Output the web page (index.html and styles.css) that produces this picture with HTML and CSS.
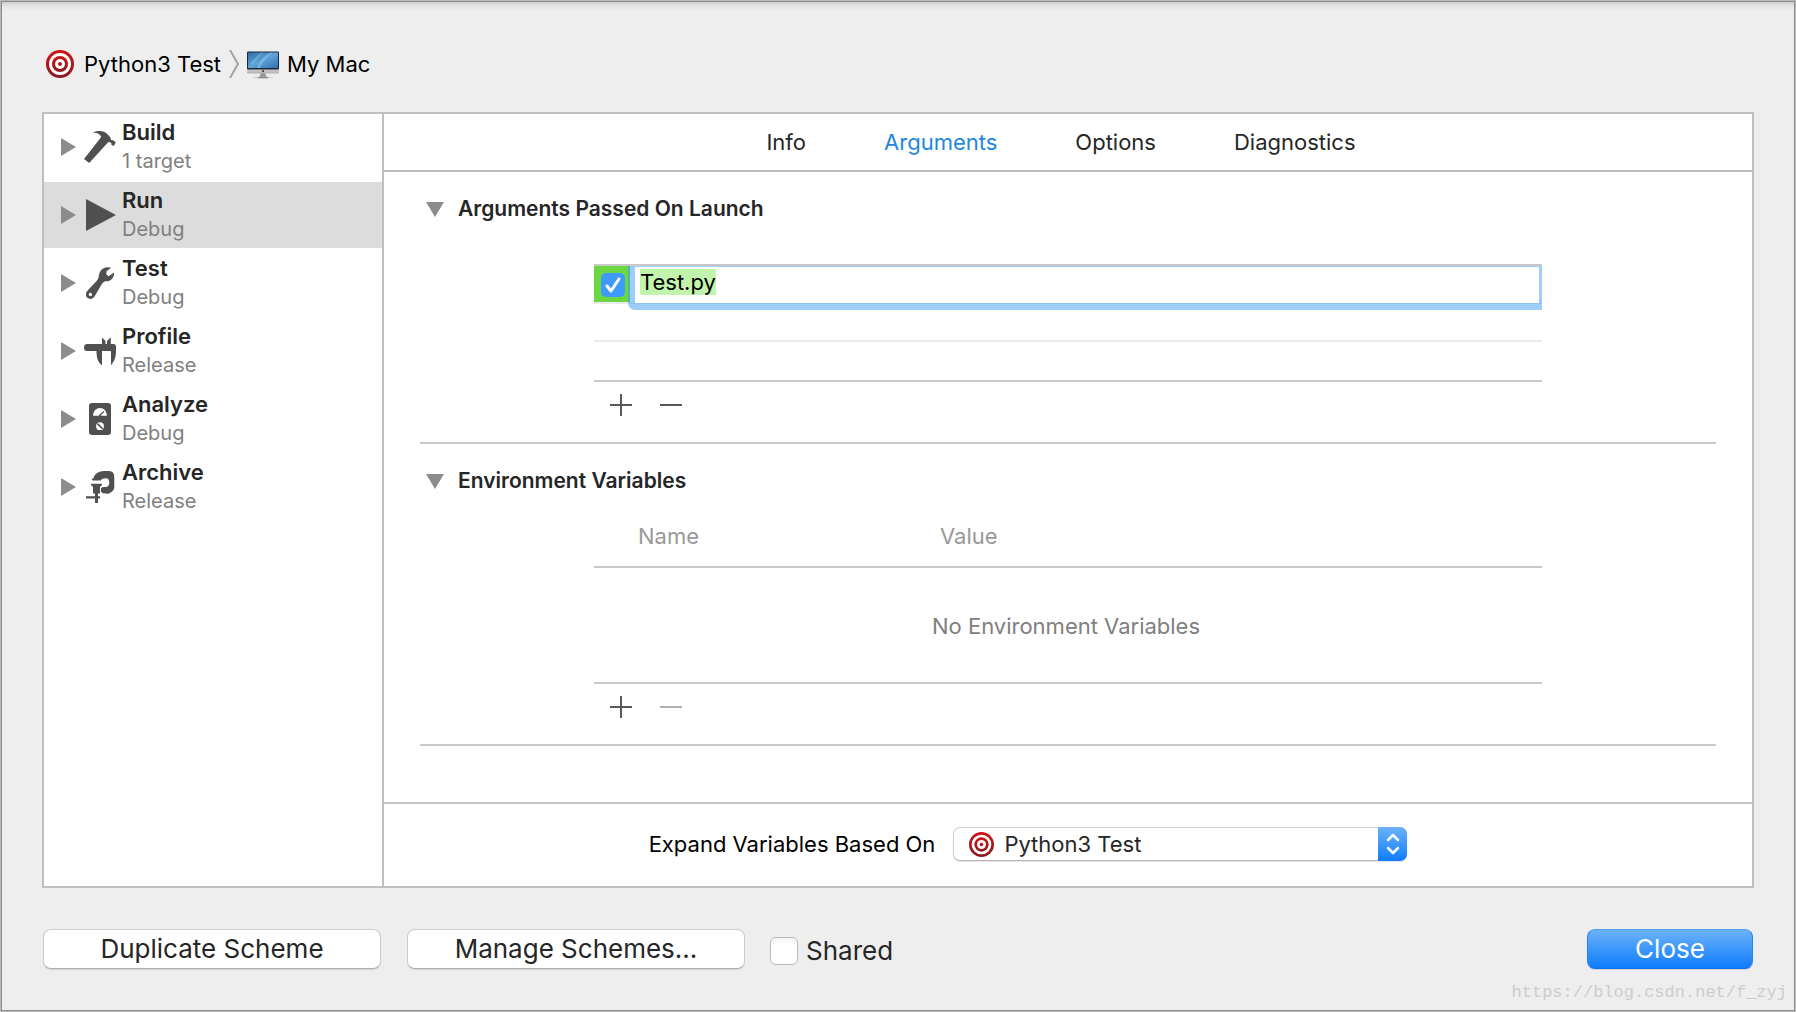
FILE: index.html
```html
<!DOCTYPE html>
<html lang="en">
<head>
<meta charset="utf-8">
<title>Python3 Test – Scheme</title>
<link rel="stylesheet" href="styles.css">
</head>
<body>
<svg class="sprite" aria-hidden="true">
  <defs>
    <linearGradient id="red" x1="0" y1="0" x2="0" y2="1"><stop offset="0" stop-color="#cf1317"/><stop offset="1" stop-color="#8a1a20"/></linearGradient>
    <linearGradient id="sky" x1="0" y1="0" x2="1" y2="1"><stop offset="0" stop-color="#2e6ba8"/><stop offset="0.5" stop-color="#5fa3d8"/><stop offset="1" stop-color="#2f6fb0"/></linearGradient>
    <linearGradient id="chin" x1="0" y1="0" x2="0" y2="1"><stop offset="0" stop-color="#d8d4d8"/><stop offset="1" stop-color="#b4b0b4"/></linearGradient>
  </defs>
  <symbol id="target" viewBox="0 0 28 28">
    <circle cx="14" cy="14" r="14" fill="url(#red)"/>
    <circle cx="14" cy="14" r="11" fill="#fff"/>
    <circle cx="14" cy="14" r="8" fill="url(#red)"/>
    <circle cx="14" cy="14" r="5" fill="#fff"/>
    <circle cx="14" cy="14" r="2" fill="#b3161b"/>
  </symbol>
  <symbol id="right" viewBox="0 0 15 18"><path d="M0 0L15 9L0 18Z"/></symbol>
  <symbol id="down" viewBox="0 0 18 15"><path d="M0 0H18L9 15Z"/></symbol>
  <symbol id="plus" viewBox="0 0 22 22"><path d="M10 0h2v10h10v2H12v10h-2V12H0v-2h10z"/></symbol>
  <symbol id="minus" viewBox="0 0 22 22"><path d="M0 10h22v2H0z"/></symbol>
</svg>

<div class="window">
  <header class="scheme">
    <svg class="scheme-target"><use href="#target"/></svg>
    <span>Python3 Test</span>
    <svg class="chevron" viewBox="0 0 10 28"><path d="M1 0L9 14L1 28" fill="none" stroke="#a3a3a3" stroke-width="2"/></svg>
    <svg class="mac" viewBox="0 0 32 32">
      <ellipse cx="16" cy="29.500" rx="11" ry="1.200" fill="#d6d6d6"/>
      <path d="M13.500 25h5l.8 4h-6.600z" fill="#9a9a9a"/>
      <path d="M11 29.200h10v1H11z" fill="#7d7d7d"/>
      <rect y="20" width="32" height="5.500" rx="1" fill="url(#chin)"/>
      <rect y="3.500" width="32" height="18" rx="1" fill="#1c2938"/>
      <rect x="1" y="4.500" width="30" height="15.500" fill="url(#sky)"/>
      <path d="M10 20C12 13 17 8.500 24 4.500h2C20 9 15 14 13 20zM4 15C8 10 12 7 15 4.500h1C13 8 9 12 5 17z" fill="#9cc9ea" opacity=".5"/>
      <circle cx="16" cy="23.200" r="1.100" fill="#444"/>
    </svg>
    <span>My Mac</span>
  </header>

  <main class="panel">
    <nav class="actions" aria-label="Scheme actions">
      <a class="action" href="#build">
        <svg class="tri"><use href="#right"/></svg>
        <svg class="glyph" viewBox="0 0 32 32"><path d="M9 1.500C15-.8 20-.3 23.500 3.200L26.500 6.500L27 9L29 9.300L31.800 11.200L29.800 15L27.500 14L27.200 12L24.800 10.800L23 12.500L5.200 32L0 28L14.500 9.500L17.200 6C16.500 3 13 2 9 1.500Z"/></svg>
        <span><b>Build</b><small>1 target</small></span>
      </a>
      <a class="action current" href="#run" aria-current="page">
        <svg class="tri"><use href="#right"/></svg>
        <svg class="glyph" viewBox="0 0 32 32"><path d="M2 0L32 16L2 32Z"/></svg>
        <span><b>Run</b><small>Debug</small></span>
      </a>
      <a class="action" href="#test">
        <svg class="tri"><use href="#right"/></svg>
        <svg class="glyph" viewBox="0 0 32 32"><path fill-rule="evenodd" d="M3.200 24L13 13.500C15 11 14.500 9 15.500 6C17 1.500 22-1 27.200.8L22.500 4.300L22.300 7.200L24.600 9.200L30 5.600C30.500 10 27 14.500 22 14.300C19.500 14.300 18.500 16 17 18.500L10.500 29.500C9 32 5.500 32.800 3.300 30.800C1.400 29 1.500 26 3.200 24ZM6.400 25.700A1.700 1.700 0 1 0 6.400 29.100A1.700 1.700 0 1 0 6.400 25.700Z"/></svg>
        <span><b>Test</b><small>Debug</small></span>
      </a>
      <a class="action" href="#profile">
        <svg class="tri"><use href="#right"/></svg>
        <svg class="glyph" viewBox="0 0 32 32"><path d="M3 9H18V2.500L21.500 6V9H23V6L26.800 2.200V9H29.500Q32 9 32 11.500V16C32 22 30.500 26 27 30.200V16H18V30.200C13.500 27 12.500 22 12.500 16H3Q0 16 0 12.500Q0 9 3 9Z"/></svg>
        <span><b>Profile</b><small>Release</small></span>
      </a>
      <a class="action" href="#analyze">
        <svg class="tri"><use href="#right"/></svg>
        <svg class="glyph" viewBox="0 0 32 32"><rect x="5" width="22" height="32" rx="3"/><path d="M9 12.800C9.500 8 12 5 16 5S22.500 8 23 12.800H17.500A1.800 1.800 0 0 0 14.500 12.800Z" fill="#fff"/><path d="M15.500 12.500L20 8.500" stroke="#505050" stroke-width="1.200"/><circle cx="16" cy="23.200" r="3.900" fill="#fff"/><path d="M13.500 20.600L18.500 25.800" stroke="#505050" stroke-width="1.600"/></svg>
        <span><b>Analyze</b><small>Debug</small></span>
      </a>
      <a class="action" href="#archive">
        <svg class="tri"><use href="#right"/></svg>
        <svg class="glyph" viewBox="0 0 32 32"><path d="M7.500 7.500H9.500C10 3 15 0 20 0H25Q30.300 0 30.300 6V16Q30.300 19 27.500 21L24.500 22.700L19 22.300L17 21V17L19 16H22.500Q25.300 15 25.300 11.500Q25.300 7.500 22 7.300L18.500 7.800L16.500 9.500H8.500ZM7 12.700H18V14L16 16V22.500H14V32H11V22.500H9V16L7 14ZM2 25.200H16V27.500H2Z"/></svg>
        <span><b>Archive</b><small>Release</small></span>
      </a>
    </nav>

    <div class="detail">
      <nav class="tabs" aria-label="Settings">
        <button type="button">Info</button>
        <button type="button" class="active">Arguments</button>
        <button type="button">Options</button>
        <button type="button">Diagnostics</button>
      </nav>

      <div class="sections">
        <section>
          <h2><svg class="fold"><use href="#down"/></svg>Arguments Passed On Launch</h2>
          <table class="arguments" aria-label="Arguments Passed On Launch">
            <tbody>
              <tr>
                <td class="enabled"><label class="check"><input type="checkbox" checked aria-label="Use argument"><svg viewBox="0 0 24 24"><path d="M6 13L10 18L18 6" fill="none" stroke="#fff" stroke-width="3" stroke-linecap="round" stroke-linejoin="round"/></svg></label></td>
                <td><input class="argument" type="text" value="Test.py" aria-label="Argument" spellcheck="false" autofocus></td>
              </tr>
              <tr><td colspan="2"></td></tr>
              <tr class="last"><td colspan="2"></td></tr>
            </tbody>
          </table>
          <div class="tools">
            <button type="button" aria-label="Add argument"><svg><use href="#plus"/></svg></button>
            <button type="button" aria-label="Remove argument"><svg><use href="#minus"/></svg></button>
          </div>
        </section>

        <section>
          <h2><svg class="fold"><use href="#down"/></svg>Environment Variables</h2>
          <table class="variables">
            <thead><tr><th class="name">Name</th><th>Value</th></tr></thead>
            <tbody><tr><td colspan="2">No Environment Variables</td></tr></tbody>
          </table>
          <div class="tools">
            <button type="button" aria-label="Add variable"><svg><use href="#plus"/></svg></button>
            <button type="button" aria-label="Remove variable" disabled><svg><use href="#minus"/></svg></button>
          </div>
        </section>
      </div>

      <div class="expand">
        <label for="expand">Expand Variables Based On</label>
        <div class="popup">
          <select id="expand"><option>Python3 Test</option></select>
          <svg class="popup-target"><use href="#target"/></svg>
          <span class="popup-arrows"><svg viewBox="0 0 14 22"><path d="M2 7L7 2L12 7M2 15L7 20L12 15" fill="none" stroke="#fff" stroke-width="2.500" stroke-linecap="round" stroke-linejoin="round"/></svg></span>
        </div>
      </div>
    </div>
  </main>

  <footer class="bottom">
    <button type="button" class="push">Duplicate Scheme</button>
    <button type="button" class="push">Manage Schemes...</button>
    <label class="shared"><input type="checkbox">Shared</label>
    <button type="button" class="push primary">Close</button>
  </footer>
  <span class="mark">https://blog.csdn.net/f_zyj</span>
</div>
<script src="script.js"></script>
</body>
</html>
```
FILE: script.js
```js
// Start with the argument ready to be typed over.
const field = document.querySelector('.argument');
field.focus();
field.select();
```
FILE: styles.css
```css
* { box-sizing: border-box; }

body {
  margin: 0;
  padding: 2px;
  background: #b9b9b9;
  color: #000;
  font: 22px/28px Inter, "Liberation Sans", sans-serif;
}

button, input, select { font: inherit; color: inherit; margin: 0; }
button { padding: 0; border: 0; background: none; }
svg { display: block; flex: none; }
.sprite { position: absolute; width: 0; height: 0; }

.window {
  position: relative;
  display: flex;
  flex-direction: column;
  min-height: calc(100vh - 4px);
  padding: 0 40px;
  background: linear-gradient(#cfcfcf, #e4e4e4 4px, #eee 9px);
  box-shadow: 0 0 0 1px #8c8c8c;
}

.scheme { display: flex; align-items: center; padding: 46px 4px 32px; }
.scheme-target { width: 28px; height: 28px; margin-right: 10px; }
.chevron { width: 10px; height: 28px; margin: 0 8px; }
.mac { width: 32px; height: 32px; margin-right: 8px; }

.panel { flex: 1; display: flex; border: 2px solid #bfbfbf; background: #fff; }

.actions { width: 340px; flex: none; border-right: 2px solid #bfbfbf; }
.action {
  display: flex;
  align-items: center;
  margin-bottom: 2px;
  padding: 4px 16px 5px;
  color: #262626;
  text-decoration: none;
}
.current { background: #dcdcdc; }
.action b, .action small { display: block; }
.action b { font-weight: 600; }
.action small { padding-top: 1px; font-size: 20px; color: #808080; }
.tri { width: 15px; height: 18px; margin: 0 8px 0 1px; fill: #8c8c8c; }
.glyph { width: 32px; height: 32px; margin-right: 6px; fill: #505050; }

.detail { flex: 1; min-width: 0; display: flex; flex-direction: column; }

.tabs {
  display: flex;
  justify-content: center;
  gap: 78px;
  padding: 14px 14px 14px 0;
  border-bottom: 2px solid #bfbfbf;
}
.tabs button { color: #262626; }
.tabs .active { color: #1f87dd; }

.sections { flex: 1; padding: 0 36px; }
section { padding: 25px 0 26px; border-bottom: 2px solid #c8c8c8; }
h2 {
  display: flex;
  align-items: center;
  gap: 14px;
  margin: 0;
  padding-left: 6px;
  font-size: 21px;
  line-height: 24px;
  font-weight: 600;
  color: #262626;
}
.fold { width: 18px; height: 15px; fill: #8c8c8c; }

table {
  width: calc(100% - 348px);
  margin: 0 174px;
  border-spacing: 0;
  table-layout: fixed;
}
td, th { padding: 0; }

.arguments { margin-top: 43px; border-top: 2px solid #c8c8c8; border-bottom: 2px solid #c8c8c8; }
.arguments td { height: 38px; border-bottom: 2px solid #ebebeb; vertical-align: top; }
.arguments .last td { border-bottom: 0; }
.arguments .enabled { width: 36px; padding: 7px 0 0 7px; background: #6ad743; background-clip: padding-box; }
.check { position: relative; display: block; width: 24px; height: 24px; }
.check input {
  display: block;
  width: 24px;
  height: 24px;
  appearance: none;
  border-radius: 5px;
  background: #3f9bfb;
}
.check svg { position: absolute; inset: 0; width: 24px; height: 24px; pointer-events: none; }
.argument {
  position: relative;
  display: block;
  width: calc(100% + 2px);
  height: 44px;
  margin: 0 0 -8px -2px;
  padding: 1px 4px 7px 5px;
  border: solid rgba(62, 155, 245, 0.5);
  border-width: 1px 3px 7px 7px;
  border-bottom-left-radius: 7px;
  outline: 0;
  background: #fff;
  background-clip: padding-box;
  caret-color: transparent;
}
.argument::selection { background: #c3f4ad; color: #000; }

.variables { margin-top: 13px; border-bottom: 2px solid #c8c8c8; }
th { height: 62px; border-bottom: 2px solid #c8c8c8; color: #999; font-weight: 400; text-align: left; }
.name { width: 346px; padding-left: 44px; }
.variables td { height: 114px; padding: 2px 4px 0 0; color: #808080; text-align: center; }

.tools { display: flex; gap: 28px; padding: 12px 190px 0; fill: #595959; }
.tools svg { width: 22px; height: 22px; }
.tools button:disabled { fill: #b0b0b0; }

.expand {
  display: flex;
  align-items: center;
  justify-content: center;
  gap: 18px;
  padding: 23px 80px 25px 0;
  border-top: 2px solid #c4c4c4;
}
.popup { position: relative; width: 454px; }
.popup select {
  display: block;
  width: 100%;
  height: 34px;
  padding: 0 40px 0 50px;
  appearance: none;
  border: 1px solid #cfcfcf;
  border-bottom-color: #b5b5b5;
  border-radius: 7px;
  background: #fff;
  color: #262626;
  box-shadow: 0 1px 1px rgba(0, 0, 0, 0.1);
}
.popup-target { position: absolute; left: 16px; top: 5px; width: 25px; height: 25px; }
.popup-arrows {
  position: absolute;
  right: 0;
  top: 0;
  display: grid;
  place-items: center;
  width: 29px;
  height: 34px;
  border-radius: 0 7px 7px 0;
  background: linear-gradient(#6bb2f9, #0f7dfc);
  pointer-events: none;
}
.popup-arrows svg { width: 14px; height: 22px; }

.bottom { display: flex; align-items: center; padding: 41px 1px; font-size: 26px; line-height: 32px; color: #262626; }
.push {
  width: 338px;
  height: 40px;
  margin-right: 26px;
  border: 1px solid #cdcdcd;
  border-bottom-color: #b0b0b0;
  border-radius: 8px;
  background: #fff;
  box-shadow: 0 1px 1px rgba(0, 0, 0, 0.12);
}
.primary {
  width: 166px;
  margin: 0 0 0 auto;
  border-color: #559fee #2a84f0 #0d6ff0;
  background: linear-gradient(#6bb2f9, #0f7dfc);
  color: #fff;
}
.shared { display: flex; align-items: center; gap: 8px; padding-top: 3px; margin-left: -1px; }
.shared input {
  width: 28px;
  height: 28px;
  appearance: none;
  border: 1px solid #b8b8b8;
  border-radius: 6px;
  background: linear-gradient(#f6f6f6, #fff 8px);
}

.mark {
  position: absolute;
  right: 7px;
  bottom: 5px;
  font: 17px/24px "Liberation Mono", monospace;
  color: #cdcdc9;
}
```
